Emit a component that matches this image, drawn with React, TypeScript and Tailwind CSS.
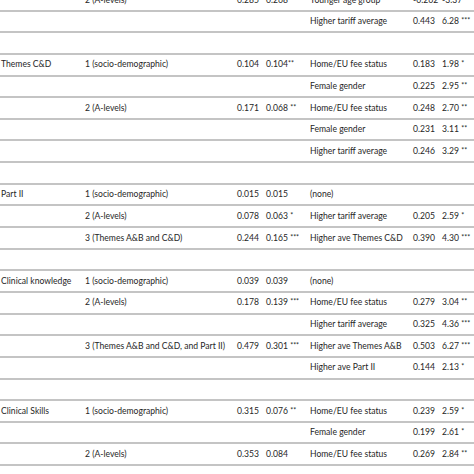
import * as React from 'react'

type Row = [string, string, string, string, string, string, string]

const rows: Row[] = [
	['', '2 (A-levels)', '0.285', '0.268', 'Younger age group', '-0.262', '-3.37'],
	['', '', '', '', 'Higher tariff average', '0.443', '6.28 ***'],
	['', '', '', '', '', '', ''],
	['Themes C&D', '1 (socio-demographic)', '0.104', '0.104**', 'Home/EU fee status', '0.183', '1.98 *'],
	['', '', '', '', 'Female gender', '0.225', '2.95 **'],
	['', '2 (A-levels)', '0.171', '0.068 **', 'Home/EU fee status', '0.248', '2.70 **'],
	['', '', '', '', 'Female gender', '0.231', '3.11 **'],
	['', '', '', '', 'Higher tariff average', '0.246', '3.29 **'],
	['', '', '', '', '', '', ''],
	['Part II', '1 (socio-demographic)', '0.015', '0.015', '(none)', '', ''],
	['', '2 (A-levels)', '0.078', '0.063 *', 'Higher tariff average', '0.205', '2.59 *'],
	['', '3 (Themes A&B and C&D)', '0.244', '0.165 ***', 'Higher ave Themes C&D', '0.390', '4.30 ***'],
	['', '', '', '', '', '', ''],
	['Clinical knowledge', '1 (socio-demographic)', '0.039', '0.039', '(none)', '', ''],
	['', '2 (A-levels)', '0.178', '0.139 ***', 'Home/EU fee status', '0.279', '3.04 **'],
	['', '', '', '', 'Higher tariff average', '0.325', '4.36 ***'],
	['', '3 (Themes A&B and C&D, and Part II)', '0.479', '0.301 ***', 'Higher ave Themes A&B', '0.503', '6.27 ***'],
	['', '', '', '', 'Higher ave Part II', '0.144', '2.13 *'],
	['', '', '', '', '', '', ''],
	['Clinical Skills', '1 (socio-demographic)', '0.315', '0.076 **', 'Home/EU fee status', '0.239', '2.59 *'],
	['', '', '', '', 'Female gender', '0.199', '2.61 *'],
	['', '2 (A-levels)', '0.353', '0.084', 'Home/EU fee status', '0.269', '2.84 **'],
]

// split trailing significance stars so they can be set smaller
function Cell({ value }: { value: string }) {
	const m = value.match(/^(.*?)(\s?)(\*+)$/)
	if (!m) return <span>{value}</span>
	return (
		<span>
			{m[1]}
			{m[2]}
			<span className="text-[7px] align-[1px]">{m[3]}</span>
		</span>
	)
}

export default function App() {
	return (
		<div className="w-[474px] h-[474px] overflow-hidden bg-white text-[#262626] text-[8.6px] leading-none font-['Lato','Open_Sans',sans-serif]">
			<div className="flex flex-col -mt-[10px]">
				{rows.map((r, i) => (
					<div
						key={i}
						className="grid grid-cols-[84px_152px_29px_44px_103px_29px_1fr] items-center h-[21.65px] pl-[1px] border-b-2 border-[#c4c4c4]"
					>
						{r.map((c, j) => (
							<div key={j} className="whitespace-nowrap">
								<Cell value={c} />
							</div>
						))}
					</div>
				))}
			</div>
		</div>
	)
}
